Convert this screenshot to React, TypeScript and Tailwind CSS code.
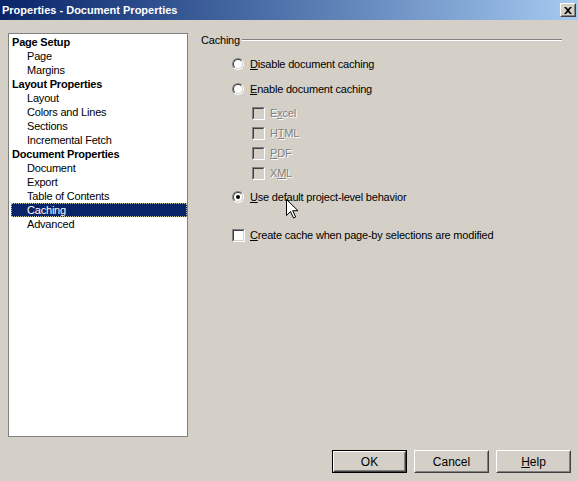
import React from 'react';

type Item = { label: string; header?: boolean; selected?: boolean };

const items: Item[] = [
  { label: 'Page Setup', header: true },
  { label: 'Page' },
  { label: 'Margins' },
  { label: 'Layout Properties', header: true },
  { label: 'Layout' },
  { label: 'Colors and Lines' },
  { label: 'Sections' },
  { label: 'Incremental Fetch' },
  { label: 'Document Properties', header: true },
  { label: 'Document' },
  { label: 'Export' },
  { label: 'Table of Contents' },
  { label: 'Caching', selected: true },
  { label: 'Advanced' },
];

const Radio: React.FC<{ checked?: boolean }> = ({ checked }) => (
  <span className="flex w-[12px] h-[12px] shrink-0 rounded-full border border-t-[#808080] border-l-[#808080] border-r-white border-b-white">
    <span className="flex w-full h-full items-center justify-center rounded-full border border-t-[#404040] border-l-[#404040] border-r-[#d4d0c8] border-b-[#d4d0c8] bg-white">
      {checked && <span className="w-[4px] h-[4px] rounded-full bg-black" />}
    </span>
  </span>
);

const Check: React.FC<{ disabled?: boolean }> = ({ disabled }) => (
  <span className="flex w-[13px] h-[13px] shrink-0 border border-t-[#808080] border-l-[#808080] border-r-white border-b-white">
    <span
      className={
        'w-full h-full border border-t-[#404040] border-l-[#404040] border-r-[#d4d0c8] border-b-[#d4d0c8] ' +
        (disabled ? 'bg-[#d4d0c8]' : 'bg-white')
      }
    />
  </span>
);

const Btn: React.FC<{ children: React.ReactNode; isDefault?: boolean }> = ({ children, isDefault }) => (
  <div className={'w-[75px] h-[23px] flex ' + (isDefault ? 'border border-black' : '')}>
    <div className="flex-1 flex border border-t-white border-l-white border-r-[#404040] border-b-[#404040]">
      <div className="flex-1 flex items-center justify-center border border-t-[#d4d0c8] border-l-[#d4d0c8] border-r-[#808080] border-b-[#808080] text-[12px] tracking-normal text-black">
        {children}
      </div>
    </div>
  </div>
);

const dis = 'text-[#808080] [text-shadow:1px_1px_0_#ffffff]';

export default function App() {
  return (
    <div className="relative w-[578px] h-[481px] bg-[#d4d0c8] flex flex-col overflow-hidden font-['Liberation_Sans',Arial,sans-serif] text-[11px] leading-[14px] tracking-[-0.2px] text-black select-none">
      {/* title bar */}
      <div className="h-[20px] shrink-0 flex items-center justify-between bg-gradient-to-r from-[#0a246a] to-[#a6caf0] pl-[2px] pr-[2px]">
        <span className="text-white font-bold text-[11px] tracking-normal">Properties - Document Properties</span>
        <div className="w-[16px] h-[14px] flex border border-t-white border-l-white border-r-[#404040] border-b-[#404040]">
          <div className="flex-1 flex items-center justify-center bg-[#d4d0c8] border border-t-[#d4d0c8] border-l-[#d4d0c8] border-r-[#808080] border-b-[#808080]">
            <svg width="8" height="7" viewBox="0 0 8 7">
              <path d="M0 0h2l2 2 2-2h2L5 3.5 8 7H6L4 5 2 7H0l3-3.5z" fill="#000" />
            </svg>
          </div>
        </div>
      </div>

      <div className="flex flex-1 pt-[13px] pl-[8px]">
        {/* tree list */}
        <div className="w-[180px] h-[404px] border border-[#808080] bg-white pt-[1px] pl-[2px]">
          {items.map((it) => (
            <div
              key={it.label}
              className={
                'h-[14px] flex items-center ' +
                (it.header ? 'pl-[1px] font-bold ' : 'pl-[16px] ') +
                (it.selected ? 'bg-[#0a246a] text-white outline-1 outline-dotted -outline-offset-1 outline-[#c8c8a0]' : '')
              }
            >
              {it.label}
            </div>
          ))}
        </div>

        {/* caching panel */}
        <div className="flex-1 ml-[13px] mr-[16px] flex flex-col">
          <div className="h-[14px] flex items-center">
            <span>Caching</span>
            <div className="flex-1 ml-[2px] h-[2px] border-t border-t-[#808080] border-b border-b-white" />
          </div>

          <div className="mt-[10px] h-[14px] flex items-center pl-[31px] gap-[6px]">
            <Radio />
            <span><u>D</u>isable document caching</span>
          </div>
          <div className="mt-[11px] h-[14px] flex items-center pl-[31px] gap-[6px]">
            <Radio />
            <span><u>E</u>nable document caching</span>
          </div>

          <div className="mt-[10px] h-[14px] flex items-center pl-[51px] gap-[5px]">
            <Check disabled />
            <span className={dis}>E<u>x</u>cel</span>
          </div>
          <div className="mt-[6px] h-[14px] flex items-center pl-[51px] gap-[5px]">
            <Check disabled />
            <span className={dis}>H<u>T</u>ML</span>
          </div>
          <div className="mt-[6px] h-[14px] flex items-center pl-[51px] gap-[5px]">
            <Check disabled />
            <span className={dis}><u>P</u>DF</span>
          </div>
          <div className="mt-[6px] h-[14px] flex items-center pl-[51px] gap-[5px]">
            <Check disabled />
            <span className={dis}>X<u>M</u>L</span>
          </div>

          <div className="mt-[10px] h-[14px] flex items-center pl-[31px] gap-[6px]">
            <Radio checked />
            <span><u>U</u>se default project-level behavior</span>
          </div>

          <div className="mt-[24px] h-[14px] flex items-center pl-[31px] gap-[5px]">
            <Check />
            <span><u>C</u>reate cache when page-by selections are modified</span>
          </div>
        </div>
      </div>

      {/* buttons */}
      <div className="h-[23px] shrink-0 mt-[13px] mb-[8px] flex justify-end gap-[7px] pr-[7px]">
        <Btn isDefault>OK</Btn>
        <Btn>Cancel</Btn>
        <Btn>
          <span><u>H</u>elp</span>
        </Btn>
      </div>

      {/* mouse pointer */}
      <svg className="absolute left-[286px] top-[199px]" width="12" height="20" viewBox="0 0 12 20">
        <path d="M0.5 0.5v16l4-4 3 6.5 2.2-1-3-6.3h5.3z" fill="#fff" stroke="#000" strokeWidth="1" />
      </svg>
    </div>
  );
}
